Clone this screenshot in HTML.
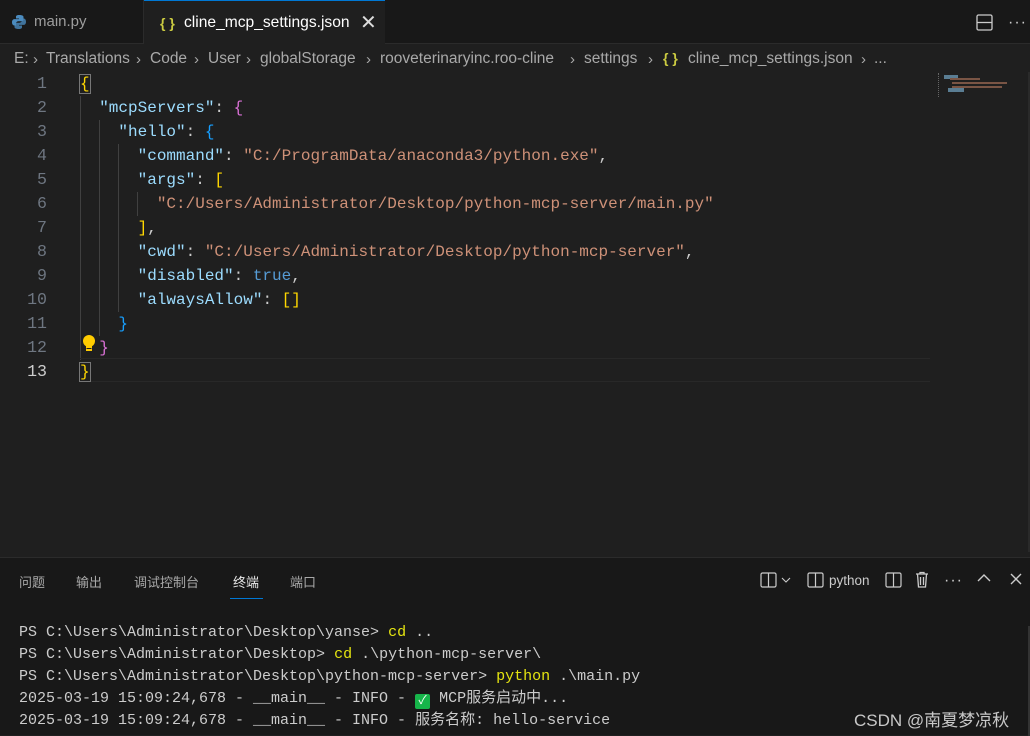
<!DOCTYPE html>
<html><head><meta charset="utf-8"><style>
*{margin:0;padding:0;box-sizing:border-box}
body{width:1030px;height:735px;background:#1f1f1f;overflow:hidden;position:relative;font-family:"Liberation Sans","Noto Sans CJK SC",sans-serif}
.tabs{position:absolute;left:0;top:0;width:1030px;height:44px;background:#181818;border-bottom:1px solid #2b2b2b}
.tab{position:absolute;top:0;height:44px;font-size:15px;line-height:44px}
.t1{left:0;width:144px;color:#9d9d9d;padding-left:34px;border-right:1px solid #2b2b2b}
.t2{left:144px;width:241px;background:#1f1f1f;color:#fff;border-top:1px solid #0078d4;padding-left:40px;height:45px;font-size:15.6px}
.cr{position:absolute;top:50px;font-size:15.5px;color:#a9a9a9;white-space:pre}
.chev{position:absolute;top:51px;font-size:15px;color:#a9a9a9}
.code{position:absolute;left:0;top:72px;font-family:"Liberation Mono",monospace;font-size:16px}
.ln{position:absolute;left:0;width:47px;text-align:right;color:#6e7681;font-size:16.6px}
.l{position:absolute;left:80px;white-space:pre;color:#ccc;height:24px;line-height:24px}
.k{color:#9cdcfe}.s{color:#ce9178}.b1{color:#ffd700}.b2{color:#da70d6}.b3{color:#179fff}.t{color:#569cd6}
.guide{position:absolute;width:1px;background:#404040}
.panel{position:absolute;left:0;top:557px;width:1030px;height:178px;background:#181818;border-top:1px solid #2b2b2b}
.ptab{position:absolute;top:14px;font-size:13px;color:#a8a8a8}
.term{position:absolute;left:19px;top:64px;font-family:"Liberation Mono","Noto Sans CJK SC",monospace;font-size:15px;color:#cccccc;line-height:22px;white-space:pre}
.y{color:#e5e510}
</style></head><body>
<div class="tabs">
<div class="tab t1"><svg style="position:absolute;left:11px;top:14px" width="16" height="16" viewBox="0 0 16 16"><path d="M8 1c-3 0-3 1.3-3 2v1.5h3v.6H3.5C2 5.1 1 6.3 1 8.3s1 3.2 2.4 3.2H5V9.7c0-1.4 1.2-2.4 2.5-2.4h3c1.2 0 2-1 2-2.1V3c0-1.2-1.2-2-4.5-2z" fill="#4b8bbe"/><path d="M8 15c3 0 3-1.3 3-2v-1.5H8v-.6h4.5c1.5 0 2.5-1.2 2.5-3.2s-1-3.2-2.4-3.2H11v1.8c0 1.4-1.2 2.4-2.5 2.4h-3c-1.2 0-2 1-2 2.1V13c0 1.2 1.2 2 4.5 2z" fill="#4b8bbe" opacity=".8"/></svg>main.py</div>
<div class="tab t2"><span style="position:absolute;left:16px;color:#cbcb41;font-size:14px;font-weight:bold">{ }</span>cline_mcp_settings.json<span style="position:absolute;left:216px;font-size:20px;color:#ddd">✕</span></div>
<svg style="position:absolute;left:976px;top:14px" width="17" height="17" viewBox="0 0 17 17"><rect x="1" y="1" width="15" height="15" rx="1.5" fill="none" stroke="#ccc" stroke-width="1.3"/><line x1="1" y1="8.5" x2="16" y2="8.5" stroke="#ccc" stroke-width="1.3"/></svg>
<div style="position:absolute;left:1008px;top:14px;color:#ccc;font-size:16px;letter-spacing:1px">···</div>
</div>
<span class="cr" style="left:14px">E:</span><span class="chev" style="left:33px">›</span>
<span class="cr" style="left:46px">Translations</span><span class="chev" style="left:136px">›</span>
<span class="cr" style="left:150px">Code</span><span class="chev" style="left:194px">›</span>
<span class="cr" style="left:208px">User</span><span class="chev" style="left:246px">›</span>
<span class="cr" style="left:260px">globalStorage</span><span class="chev" style="left:366px">›</span>
<span class="cr" style="left:380px">rooveterinaryinc.roo-cline</span><span class="chev" style="left:570px">›</span>
<span class="cr" style="left:584px">settings</span><span class="chev" style="left:648px">›</span>
<span class="cr" style="left:663px;color:#cbcb41;font-weight:bold;font-size:14px">{ }</span>
<span class="cr" style="left:688px">cline_mcp_settings.json</span><span class="chev" style="left:861px">›</span>
<span class="cr" style="left:874px">...</span>
<div class="code">
<div class="ln" style="top:0;line-height:24px">1<br>2<br>3<br>4<br>5<br>6<br>7<br>8<br>9<br>10<br>11<br>12<br><span style="color:#ccc">13</span></div>
<div class="guide" style="left:80px;top:24px;height:264px"></div>
<div class="guide" style="left:99px;top:48px;height:216px"></div>
<div class="guide" style="left:118px;top:72px;height:168px"></div>
<div class="guide" style="left:137px;top:120px;height:24px"></div>
<div style="position:absolute;left:80px;top:286px;width:850px;height:24px;border-top:1px solid #282828;border-bottom:1px solid #282828"></div>
<div class="l" style="top:0"><span class="b1" style="outline:1px solid #777">{</span></div>
<div class="l" style="top:24px">  <span class="k">"mcpServers"</span>: <span class="b2">{</span></div>
<div class="l" style="top:48px">    <span class="k">"hello"</span>: <span class="b3">{</span></div>
<div class="l" style="top:72px">      <span class="k">"command"</span>: <span class="s">"C:/ProgramData/anaconda3/python.exe"</span>,</div>
<div class="l" style="top:96px">      <span class="k">"args"</span>: <span class="b1">[</span></div>
<div class="l" style="top:120px">        <span class="s">"C:/Users/Administrator/Desktop/python-mcp-server/main.py"</span></div>
<div class="l" style="top:144px">      <span class="b1">]</span>,</div>
<div class="l" style="top:168px">      <span class="k">"cwd"</span>: <span class="s">"C:/Users/Administrator/Desktop/python-mcp-server"</span>,</div>
<div class="l" style="top:192px">      <span class="k">"disabled"</span>: <span class="t">true</span>,</div>
<div class="l" style="top:216px">      <span class="k">"alwaysAllow"</span>: <span class="b1">[]</span></div>
<div class="l" style="top:240px">    <span class="b3">}</span></div>
<div class="l" style="top:264px">  <span class="b2">}</span></div>
<div class="l" style="top:288px"><span class="b1" style="outline:1px solid #777">}</span></div>
<svg style="position:absolute;left:82px;top:262px" width="14" height="20" viewBox="0 0 14 20"><circle cx="7" cy="7" r="6" fill="#ffcc00"/><rect x="4" y="11" width="6" height="6" fill="#ffcc00"/><rect x="4.5" y="14" width="5" height="1" fill="#1f1f1f"/></svg>
</div>
<div style="position:absolute;left:938px;top:73px;width:70px;height:24px">
<div style="position:absolute;left:0;top:0;width:3px;height:24px;border-left:1px dotted #666"></div>
<div style="position:absolute;left:6px;top:2px;width:14px;height:4px;background:#5a7d93"></div>
<div style="position:absolute;left:12px;top:5px;width:30px;height:2px;background:#7a5545"></div>
<div style="position:absolute;left:14px;top:9px;width:55px;height:2px;background:#7a5545"></div>
<div style="position:absolute;left:14px;top:13px;width:50px;height:2px;background:#7a5545"></div>
<div style="position:absolute;left:10px;top:15px;width:16px;height:4px;background:#5a7d93"></div>
</div>
<div style="position:absolute;left:1028px;top:72px;width:2px;height:480px;background:#2a2a2a"></div>
<div class="panel">
<div class="ptab" style="left:19px">问题</div>
<div class="ptab" style="left:76px">输出</div>
<div class="ptab" style="left:134px">调试控制台</div>
<div class="ptab" style="left:233px;color:#e7e7e7">终端</div>
<div style="position:absolute;left:230px;top:40px;width:33px;height:1px;background:#0078d4"></div>
<div class="ptab" style="left:290px">端口</div>
<svg style="position:absolute;left:760px;top:14px" width="40" height="16" viewBox="0 0 40 16"><rect x="1" y="1" width="15" height="14" rx="1.5" fill="none" stroke="#ccc" stroke-width="1.2"/><line x1="8.5" y1="1" x2="8.5" y2="15" stroke="#ccc" stroke-width="1.2"/><path d="M22 6l4 4 4-4" fill="none" stroke="#ccc" stroke-width="1.1"/></svg>
<svg style="position:absolute;left:807px;top:14px" width="17" height="16" viewBox="0 0 17 16"><rect x="1" y="1" width="15" height="14" rx="1.5" fill="none" stroke="#ccc" stroke-width="1.2"/><line x1="8.5" y1="1" x2="8.5" y2="15" stroke="#ccc" stroke-width="1.2"/></svg>
<div style="position:absolute;left:829px;top:15px;font-size:13.5px;color:#ccc">python</div>
<svg style="position:absolute;left:885px;top:14px" width="17" height="16" viewBox="0 0 17 16"><rect x="1" y="1" width="15" height="14" rx="1.5" fill="none" stroke="#ccc" stroke-width="1.2"/><line x1="8.5" y1="1" x2="8.5" y2="15" stroke="#ccc" stroke-width="1.2"/></svg>
<svg style="position:absolute;left:914px;top:13px" width="16" height="17" viewBox="0 0 16 17"><path d="M2 3h12M6 3V1.5h4V3M3.5 3l1 13h7l1-13M6.5 6v8M9.5 6v8" fill="none" stroke="#ccc" stroke-width="1.3"/></svg>
<div style="position:absolute;left:944px;top:14px;color:#ccc;font-size:16px;letter-spacing:1px">···</div>
<svg style="position:absolute;left:977px;top:15px" width="14" height="10" viewBox="0 0 14 10"><path d="M1 8l6-6 6 6" fill="none" stroke="#ccc" stroke-width="1.4"/></svg>
<svg style="position:absolute;left:1010px;top:15px" width="12" height="12" viewBox="0 0 12 12"><path d="M1 1l10 10M11 1L1 11" stroke="#ccc" stroke-width="1.4"/></svg>
<div class="term">PS C:\Users\Administrator\Desktop\yanse> <span class="y">cd</span> ..
PS C:\Users\Administrator\Desktop> <span class="y">cd</span> .\python-mcp-server\
PS C:\Users\Administrator\Desktop\python-mcp-server> <span class="y">python</span> .\main.py
2025-03-19 15:09:24,678 - __main__ - INFO - <span style="display:inline-block;width:15px;height:15px;background:#16b54a;border-radius:2px;color:#fff;font-size:12px;line-height:15px;text-align:center;vertical-align:-2px">✓</span> MCP服务启动中...
2025-03-19 15:09:24,678 - __main__ - INFO - 服务名称: hello-service</div>
<div style="position:absolute;left:854px;top:148px;font-size:17px;color:#c8c8c8">CSDN @南夏梦凉秋</div>
<div style="position:absolute;left:1028px;top:68px;width:2px;height:110px;background:#333"></div>
</div>
</body></html>
